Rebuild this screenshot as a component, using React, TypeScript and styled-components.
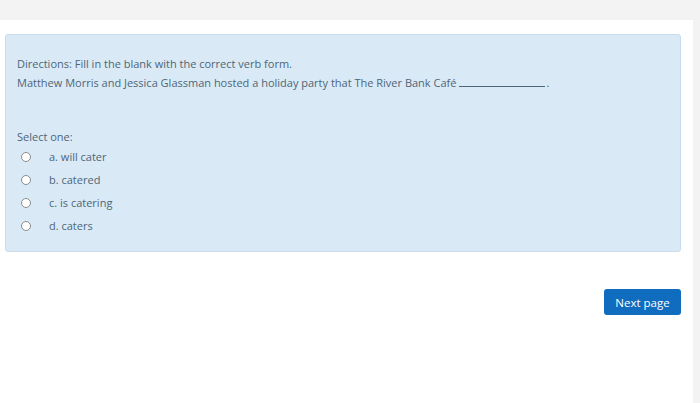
import React from "react";
import styled, { createGlobalStyle } from "styled-components";

const Global = createGlobalStyle`
  html, body { margin: 0; padding: 0; background: #f3f3f3; }
  body { font-family: "Open Sans", "Liberation Sans", sans-serif; }
`;

const Page = styled.div`
  width: 700px;
  height: 403px;
  display: flex;
  flex-direction: column;
  overflow: hidden;
`;

const TopBar = styled.div`
  height: 20px;
  flex: none;
`;

const Main = styled.div`
  flex: 1;
  width: 693px;
  background: #ffffff;
  padding: 14px 12px 0 5px;
  box-sizing: border-box;
`;

const Formulation = styled.div`
  background: #d9eaf6;
  border: 1px solid #c8dced;
  border-radius: 3px;
  height: 218px;
  box-sizing: border-box;
  padding: 19px 11px 0 11px;
  color: #4f6576;
  font-size: 11px;
`;

const Para = styled.p`
  margin: 0;
  line-height: 19px;
  white-space: nowrap;
`;

const Blank = styled.span`
  display: inline-block;
  width: 86px;
  border-bottom: 1px solid #4f6576;
  height: 11px;
  margin-left: 3px;
  margin-right: 1px;
`;

const Prompt = styled.div`
  margin-top: 37px;
  line-height: 16px;
`;

const Options = styled.div`
  display: flex;
  flex-direction: column;
  padding-left: 4px;
`;

const Option = styled.label`
  display: flex;
  align-items: center;
  height: 23px;
`;

const Radio = styled.span`
  width: 8px;
  height: 8px;
  border: 1px solid #8c8c8c;
  border-radius: 50%;
  background: #ffffff;
  flex: none;
  margin-right: 18px;
`;

const Footer = styled.div`
  display: flex;
  justify-content: flex-end;
  padding-top: 37px;
`;

const Button = styled.button`
  width: 77px;
  height: 26px;
  background: #0f6cbf;
  color: #ffffff;
  border: none;
  border-radius: 3px;
  font-family: "Open Sans", "Liberation Sans", sans-serif;
  font-size: 11.5px;
  padding: 0;
`;

const options = ["a. will cater", "b. catered", "c. is catering", "d. caters"];

export default function App() {
  return (
    <Page>
      <Global />
      <TopBar />
      <Main>
        <Formulation>
          <Para>Directions: Fill in the blank with the correct verb form.</Para>
          <Para>
            Matthew Morris and Jessica Glassman hosted a holiday party that The River Bank Café
            <Blank />.
          </Para>
          <Prompt>Select one:</Prompt>
          <Options>
            {options.map((o) => (
              <Option key={o}>
                <Radio />
                {o}
              </Option>
            ))}
          </Options>
        </Formulation>
        <Footer>
          <Button>Next page</Button>
        </Footer>
      </Main>
    </Page>
  );
}
